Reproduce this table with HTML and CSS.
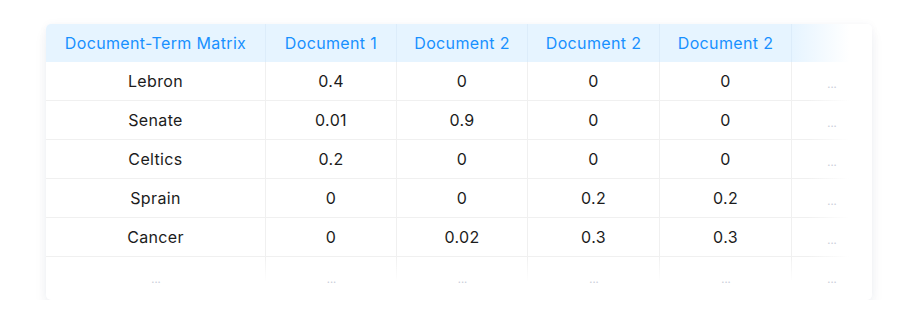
FILE: index.html
```html
<!DOCTYPE html>
<html>
<head>
<meta charset="utf-8">
<link rel="stylesheet" href="styles.css">
</head>
<body>
<div class="card">
  <div class="matrix">
    <div class="cell head">Document-Term Matrix</div>
    <div class="cell head">Document 1</div>
    <div class="cell head">Document 2</div>
    <div class="cell head">Document 2</div>
    <div class="cell head">Document 2</div>
    <div class="cell head fade"></div>

    <div class="cell">Lebron</div><div class="cell">0.4</div><div class="cell">0</div><div class="cell">0</div><div class="cell">0</div><div class="cell more fade">...</div>
    <div class="cell">Senate</div><div class="cell">0.01</div><div class="cell">0.9</div><div class="cell">0</div><div class="cell">0</div><div class="cell more fade">...</div>
    <div class="cell">Celtics</div><div class="cell">0.2</div><div class="cell">0</div><div class="cell">0</div><div class="cell">0</div><div class="cell more fade">...</div>
    <div class="cell">Sprain</div><div class="cell">0</div><div class="cell">0</div><div class="cell">0.2</div><div class="cell">0.2</div><div class="cell more fade">...</div>
    <div class="cell">Cancer</div><div class="cell">0</div><div class="cell">0.02</div><div class="cell">0.3</div><div class="cell">0.3</div><div class="cell more fade">...</div>

    <div class="cell more last">...</div><div class="cell more last">...</div><div class="cell more last">...</div><div class="cell more last">...</div><div class="cell more last">...</div><div class="cell more last end">...</div>
  </div>
</div>
</body>
</html>
```

FILE: styles.css
```css
html, body {
  margin: 0;
  padding: 0;
  background: #ffffff;
}
body {
  padding: 24px 0 0 46px;
  font-family: "Inter", "Noto Sans", sans-serif;
}
.card {
  width: 826px;
  height: 276px;
  background: #ffffff;
  border-radius: 5px;
  box-shadow: 0 8px 14px rgba(30, 50, 90, 0.06), 0 0 9px rgba(30, 50, 90, 0.04);
  overflow: hidden;
}
.matrix {
  display: grid;
  grid-template-columns: 220px 131px 131px 132px 132px 80px;
  grid-template-rows: 38px repeat(5, 39px) 25px;
}
.cell {
  display: flex;
  align-items: center;
  justify-content: center;
  font-size: 16px;
  letter-spacing: 0.35px;
  color: #1c1c1c;
  border-bottom: 1px solid #f0f0f0;
  border-right: 1px solid #f0f0f0;
  box-sizing: border-box;
}
.head {
  background: #e6f4ff;
  color: #1890ff;
  border-bottom: none;
  border-right-color: #dcecfa;
}
.head.fade {
  background: linear-gradient(to right, #e6f4ff 0%, #ffffff 72%);
}
.fade {
  border-right: none;
  border-bottom: none;
  background: linear-gradient(to right, #f0f0f0 20%, rgba(255,255,255,0) 72%) left bottom / 100% 1px no-repeat;
}
.more {
  color: #c9ccd8;
  font-size: 11px;
  letter-spacing: 0;
  padding-top: 5px;
}
.last {
  border-bottom: none;
  border-right: none;
  padding-top: 18px;
  background: linear-gradient(to bottom, #f0f0f0, rgba(255,255,255,0)) right top / 1px 100% no-repeat;
}
.last.end {
  background: none;
}
```
